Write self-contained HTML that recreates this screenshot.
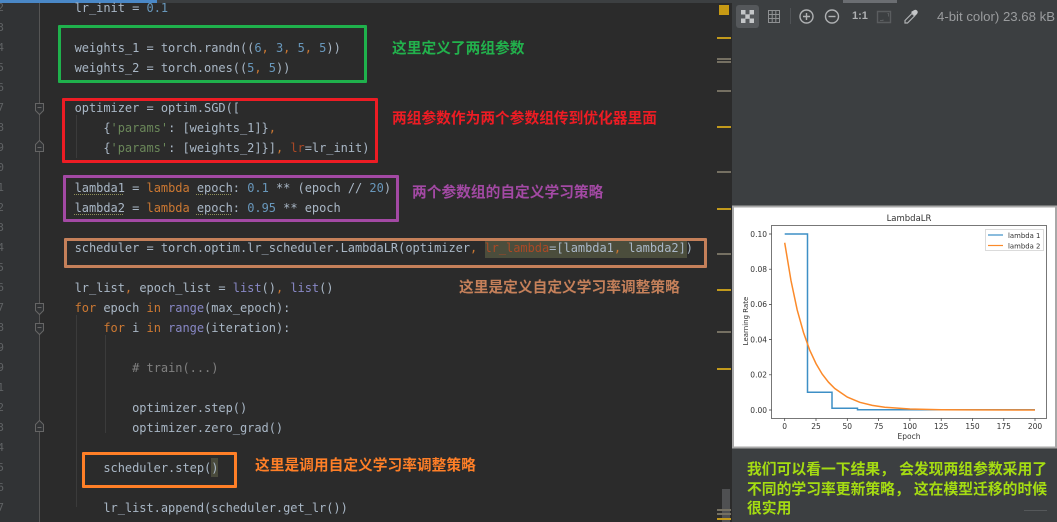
<!DOCTYPE html>
<html><head><meta charset="utf-8"><style>
html,body{margin:0;padding:0;background:#2b2b2b;}
#r{position:relative;width:1057px;height:522px;overflow:hidden;background:#2b2b2b;font-family:"DejaVu Sans Mono","Liberation Mono",monospace;filter:blur(.3px);}
.a{position:absolute;}
.l{position:absolute;left:74.6px;font-size:12px;letter-spacing:-.035px;line-height:20px;height:20px;white-space:pre;color:#a9b7c6;}
.n{color:#6897bb}.k{color:#cc7832}.s{color:#6a8759}.b{color:#8888c6}.p{color:#aa4926}.c{color:#808080}
.u{text-decoration:underline dotted #8f8f58 1px;text-underline-offset:2px}
.g{position:absolute;left:-4px;width:8px;font-size:11px;line-height:20px;color:#5f6264;text-align:right;font-family:"DejaVu Sans Mono",monospace}
.box{position:absolute;box-sizing:border-box;border-style:solid;border-width:3px;border-radius:1px;}
.t{position:absolute;font-family:"Liberation Sans","Noto Sans CJK SC",sans-serif;font-weight:700;font-size:14.72px;line-height:20px;white-space:pre;}
.m{position:absolute;left:717px;width:14px;height:2px;}
</style></head><body><div id="r">
<div class="a" style="left:0;top:0;width:39px;height:522px;background:#313335"></div>
<div class="a" style="left:39px;top:0;width:1px;height:522px;background:#555"></div>
<div class="a" style="left:0;top:0;width:1057px;height:3px;background:#3c3f41"></div>
<div class="a" style="left:0;top:0;width:157px;height:3px;background:#4a88c7"></div>
<div class="a" style="left:76px;top:115px;width:1px;height:43px;background:#3b3b3b"></div>
<div class="a" style="left:76px;top:315px;width:1px;height:192px;background:#3b3b3b"></div>
<div class="a" style="left:105px;top:335px;width:1px;height:98px;background:#3b3b3b"></div>

<div class="g" style="top:-2px">2</div><div class="g" style="top:18px">3</div><div class="g" style="top:38px">4</div><div class="g" style="top:58px">5</div><div class="g" style="top:78px">6</div><div class="g" style="top:98px">7</div><div class="g" style="top:118px">8</div><div class="g" style="top:138px">9</div><div class="g" style="top:158px">0</div><div class="g" style="top:178px">1</div><div class="g" style="top:198px">2</div><div class="g" style="top:218px">3</div><div class="g" style="top:238px">4</div><div class="g" style="top:258px">5</div><div class="g" style="top:278px">6</div><div class="g" style="top:298px">7</div><div class="g" style="top:318px">8</div><div class="g" style="top:338px">9</div><div class="g" style="top:358px">9</div><div class="g" style="top:378px">1</div><div class="g" style="top:398px">2</div><div class="g" style="top:418px">3</div><div class="g" style="top:438px">4</div><div class="g" style="top:458px">5</div><div class="g" style="top:478px">6</div><div class="g" style="top:498px">7</div>

<svg class="a" style="left:0;top:0" width="60" height="522" fill="#313335" stroke="#666" stroke-width="1">
<path d="M35.500 103.500h8v7l-4 4-4-4z"/><path d="M37.500 107.500h4"/>
<path d="M35.500 151.500h8v-7l-4-4-4 4z"/><path d="M37.500 147.500h4"/>
<path d="M35.500 303.500h8v7l-4 4-4-4z"/><path d="M37.500 307.500h4"/>
<path d="M35.500 323.500h8v7l-4 4-4-4z"/><path d="M37.500 327.500h4"/>
<path d="M35.500 431.500h8v-7l-4-4-4 4z"/><path d="M37.500 427.500h4"/>
</svg>

<div class="a" style="left:485px;top:240px;width:202px;height:18px;background:#4b4d3c"></div>
<div class="a" style="left:211px;top:458px;width:7px;height:19px;background:#494a3b"></div>

<div class="l" style="top:-2px">lr_init = <span class="n">0.1</span></div>
<div class="l" style="top:38px">weights_1 = torch.randn((<span class="n">6</span><span class="k">,</span> <span class="n">3</span><span class="k">,</span> <span class="n">5</span><span class="k">,</span> <span class="n">5</span>))</div>
<div class="l" style="top:58px">weights_2 = torch.ones((<span class="n">5</span><span class="k">,</span> <span class="n">5</span>))</div>
<div class="l" style="top:98px">optimizer = optim.SGD([</div>
<div class="l" style="top:118px">    {<span class="s">'params'</span>: [weights_1]}<span class="k">,</span></div>
<div class="l" style="top:138px">    {<span class="s">'params'</span>: [weights_2]}]<span class="k">,</span> <span class="p">lr</span>=lr_init)</div>
<div class="l" style="top:178px"><span class="u">lambda1</span> = <span class="k">lambda</span> <span class="u">epoch</span>: <span class="n">0.1</span> ** (epoch // <span class="n">20</span>)</div>
<div class="l" style="top:198px"><span class="u">lambda2</span> = <span class="k">lambda</span> <span class="u">epoch</span>: <span class="n">0.95</span> ** epoch</div>
<div class="l" style="top:238px">scheduler = torch.optim.lr_scheduler.LambdaLR(optimizer<span class="k">,</span> <span class="p">lr_lambda</span>=[lambda1<span class="k">,</span> lambda2])</div>
<div class="l" style="top:278px">lr_list<span class="k">,</span> epoch_list = <span class="b">list</span>()<span class="k">,</span> <span class="b">list</span>()</div>
<div class="l" style="top:298px"><span class="k">for</span> epoch <span class="k">in</span> <span class="b">range</span>(max_epoch):</div>
<div class="l" style="top:318px">    <span class="k">for</span> i <span class="k">in</span> <span class="b">range</span>(iteration):</div>
<div class="l" style="top:358px">        <span class="c"># train(...)</span></div>
<div class="l" style="top:398px">        optimizer.step()</div>
<div class="l" style="top:418px">        optimizer.zero_grad()</div>
<div class="l" style="top:458px">    scheduler.step()</div>
<div class="l" style="top:498px">    lr_list.append(scheduler.get_lr())</div>

<div class="box" style="left:58px;top:25px;width:309px;height:58px;border-color:#1fb14c"></div>
<div class="box" style="left:62px;top:98px;width:316px;height:65px;border-color:#ed1c24"></div>
<div class="box" style="left:63px;top:175px;width:336px;height:47px;border-color:#a349a4"></div>
<div class="box" style="left:64px;top:238px;width:643px;height:30px;border-color:#c5805a"></div>
<div class="box" style="left:82px;top:452px;width:155px;height:36px;border-color:#ff7f27"></div>

<div class="t" style="left:392px;top:38.500px;color:#22b14c">这里定义了两组参数</div>
<div class="t" style="left:392px;top:108.500px;color:#ed1c24">两组参数作为两个参数组传到优化器里面</div>
<div class="t" style="left:412px;top:182.500px;color:#a349a4">两个参数组的自定义学习策略</div>
<div class="t" style="left:459px;top:277.500px;color:#c5805a">这里是定义自定义学习率调整策略</div>
<div class="t" style="left:255px;top:455.500px;color:#ff7f27">这里是调用自定义学习率调整策略</div>

<!-- error stripe -->
<div class="a" style="left:716px;top:3px;width:16px;height:519px;background:#2b2b2b"></div>
<div class="a" style="left:719px;top:5px;width:10px;height:10px;background:#c79a14"></div>
<div class="m" style="top:37px;background:#c29a1c"></div>
<div class="m" style="top:58px;background:#757062"></div><div class="m" style="top:61px;background:#757062"></div>
<div class="m" style="top:90px;background:#757062"></div>
<div class="m" style="top:126px;background:#c29a1c"></div>
<div class="m" style="top:171px;background:#757062"></div>
<div class="m" style="top:208px;background:#c29a1c"></div>
<div class="m" style="top:253px;background:#757062"></div>
<div class="m" style="top:289px;background:#c29a1c"></div>
<div class="m" style="top:331px;background:#757062"></div>
<div class="m" style="top:368px;background:#c29a1c"></div>
<div class="a" style="left:722px;top:489px;width:8px;height:33px;background:#4f5052"></div>
<div class="m" style="top:509px;background:#757062"></div><div class="m" style="top:513px;background:#757062"></div>
<div class="m" style="top:518px;background:#c29a1c"></div>

<!-- right panel -->
<div class="a" style="left:732px;top:0;width:325px;height:522px;background:#3c3f41"></div>
<div class="a" style="left:843px;top:0;width:54px;height:3px;background:#6b6e72"></div>
<div class="a" style="left:736px;top:5px;width:23px;height:23px;background:#55585b;border-radius:3px"></div>
<svg class="a" style="left:732px;top:0" width="200" height="32" fill="none" stroke="#afb1b3" stroke-width="1.4">
<g fill="#c4c6c8" stroke="none"><rect x="9" y="10" width="4.500" height="4.500"/><rect x="17.500" y="10" width="4.500" height="4.500"/><rect x="13.300" y="14.300" width="4.500" height="4.500"/><rect x="9" y="18.500" width="4.500" height="4.500"/><rect x="17.500" y="18.500" width="4.500" height="4.500"/></g>
<path d="M36.500 10.500h11v12h-11zM36.500 14.500h11M36.500 18.500h11M40.200 10.500v12M43.800 10.500v12" stroke="#8f9193" stroke-width="1"/>
<path d="M58.500 8v16" stroke="#505356" stroke-width="1"/>
<circle cx="74.500" cy="16.500" r="6.500"/><path d="M71 16.500h7M74.500 13v7"/>
<circle cx="100" cy="16.500" r="6.500"/><path d="M96.500 16.500h7"/>
<path d="M145.500 11.500h13v11h-13z" stroke="#5a5d5f"/><path d="M148 20.500h3v-1M155.500 13.500h1v3" stroke="#5a5d5f" stroke-width="1"/>
<path d="M173 20.500l7-7 2.500 2.500-7 7h-2.500z" stroke-width="1.200"/><path d="M179 12l4 4 2-2q1.500-2 0-3.500t-3.500 0z" fill="#c4c6c8" stroke="none"/>
</svg>
<div class="a" style="left:852px;top:8px;font:700 11px/16px 'Liberation Sans',sans-serif;color:#afb1b3">1:1</div>
<div class="a" style="left:937px;top:8px;font:13.200px/18px 'Liberation Sans',sans-serif;color:#9a9c9e;white-space:pre;">4-bit color) 23.68 kB</div>

<!-- chart -->
<svg class="a" style="left:732px;top:205px;filter:blur(.3px)" width="325" height="245" viewBox="732 205 325 245" font-family="'DejaVu Sans','Liberation Sans',sans-serif" font-size="7.500" fill="#333">
<rect x="733" y="206.500" width="323" height="241" fill="#fff" stroke="#a8a8a8" stroke-width="2"/>
<rect x="771.500" y="225.500" width="275" height="193" fill="#fff" stroke="#777" stroke-width="1"/>
<text x="909" y="221" text-anchor="middle" font-size="8.500">LambdaLR</text>
<g stroke="#333" stroke-width=".7"><path d="M769 234h2.500M769 269.200h2.500M769 304.400h2.500M769 339.600h2.500M769 374.800h2.500M769 410h2.500"/>
<path d="M784.700 418.500v2.500M816 418.500v2.500M847.300 418.500v2.500M878.600 418.500v2.500M909.900 418.500v2.500M941.200 418.500v2.500M972.500 418.500v2.500M1003.800 418.500v2.500M1035 418.500v2.500"/></g>
<g text-anchor="end"><text x="767" y="236.800">0.10</text><text x="767" y="272">0.08</text><text x="767" y="307.200">0.06</text><text x="767" y="342.400">0.04</text><text x="767" y="377.600">0.02</text><text x="767" y="412.800">0.00</text></g>
<g text-anchor="middle"><text x="784.700" y="429">0</text><text x="816" y="429">25</text><text x="847.300" y="429">50</text><text x="878.600" y="429">75</text><text x="909.900" y="429">100</text><text x="941.200" y="429">125</text><text x="972.500" y="429">150</text><text x="1003.800" y="429">175</text><text x="1035" y="429">200</text></g>
<text x="909" y="439" text-anchor="middle">Epoch</text>
<text transform="translate(748 321) rotate(-90)" text-anchor="middle" font-size="7">Learning Rate</text>
<path d="M784.700 234H807.500V392.300H832V408.200H857.500V409.800H1035" fill="none" stroke="#3d8fc6" stroke-width="1.500"/>
<path d="M784.700 242.800L791 280.600 797.200 309.900 803.500 332.500 809.700 350.100 816 363.600 822.200 374.100 828.500 382.200 834.800 388.500 847.300 397.100 859.800 402.300 872.300 405.400 884.800 407.200 909.900 409 941.200 409.700 972.500 409.900 1035 410" fill="none" stroke="#fb8a2a" stroke-width="1.500"/>
<rect x="985.500" y="229.500" width="58" height="21" fill="#fff" stroke="#ccc" stroke-width=".7"/>
<path d="M988 235h15" stroke="#3d8fc6" stroke-width="1.200"/><path d="M988 245.500h15" stroke="#fb8a2a" stroke-width="1.200"/>
<text x="1008" y="237.800" font-size="6.900">lambda 1</text><text x="1008" y="248.300" font-size="6.900">lambda 2</text>
</svg>

<div class="t" style="left:747px;top:461px;width:310px;color:#a5dc12;font-size:14.8px;line-height:19.500px">我们可以看一下结果， 会发现两组参数采用了
不同的学习率更新策略， 这在模型迁移的时候
很实用</div>
<div class="a" style="left:1024px;top:510px;width:23px;height:1px;background:#55585a"></div>
</div></body></html>
